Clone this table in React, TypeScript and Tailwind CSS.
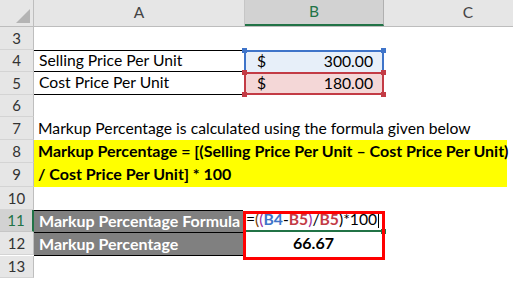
import React from "react";

const font = { fontFamily: "Lato, 'Liberation Sans', sans-serif" };

const RowNum = ({ n, active = false }: { n: number; active?: boolean }) => (
  <div
    className={
      "w-[34px] shrink-0 flex items-center justify-center text-[15px] border-b border-r " +
      (active
        ? "bg-[#d2d2d2] text-[#217346] border-b-[#c6c6c6] border-r-2 border-r-[#217346]"
        : "bg-[#e6e6e6] text-[#333] border-b-[#d4d4d4] border-r-[#bebebe]")
    }
  >
    {n}
  </div>
);

const Row = ({ n, active, children }: { n: number; active?: boolean; children?: React.ReactNode }) => (
  <div className="flex h-[22.6px]">
    <RowNum n={n} active={active} />
    {children}
  </div>
);

const Handle = ({ cls }: { cls: string }) => (
  <span className={"absolute w-[5px] h-[5px] " + cls} />
);

export default function App() {
  return (
    <div className="w-[513px] h-[281px] overflow-hidden bg-white text-black text-[15.7px]" style={font}>
      {/* column headers */}
      <div className="flex h-[27px] bg-[#e6e6e6] border-b border-[#bdbdbd] text-[15.5px]">
        <div className="w-[34px] shrink-0 relative border-r border-[#bebebe]">
          <svg className="absolute right-[3px] bottom-[3px]" width="14" height="14" viewBox="0 0 14 14">
            <polygon points="14,0 14,14 0,14" fill="#b4b4b4" />
          </svg>
        </div>
        <div className="w-[211px] shrink-0 flex items-center justify-center text-[#444] border-r border-[#c6c6c6]">A</div>
        <div className="w-[139px] shrink-0 flex items-center justify-center bg-[#d2d2d2] text-[#217346] border-r border-[#b0b0b0] border-b-2 border-b-[#217346]">B</div>
        <div className="w-[168px] shrink-0 flex items-center justify-center text-[#444]">C</div>
      </div>

      <Row n={3} />
      <Row n={4}>
        <div className="w-[210px] shrink-0 flex items-center pl-[5px] border-t border-b border-black">Selling Price Per Unit</div>
        <div className="w-[140px] shrink-0 relative flex items-center justify-between pl-[11px] pr-[9px] bg-[#e7eff9] border-2 border-b-0 border-[#3f74c9]">
          <span>$</span>
          <span>300.00</span>
          <Handle cls="bg-[#3f74c9] -left-[4px] -top-[4px]" />
          <Handle cls="bg-[#3f74c9] -right-[4px] -top-[4px]" />
        </div>
      </Row>
      <Row n={5}>
        <div className="w-[210px] shrink-0 flex items-center pl-[5px] border-b border-black">Cost Price Per Unit</div>
        <div className="w-[140px] shrink-0 relative flex items-center justify-between pl-[11px] pr-[9px] bg-[#f4d7d7] border-2 border-[#c33b45]">
          <span>$</span>
          <span>180.00</span>
          <Handle cls="bg-[#c33b45] -left-[4px] -top-[4px]" />
          <Handle cls="bg-[#c33b45] -right-[4px] -top-[4px]" />
          <Handle cls="bg-[#c33b45] -left-[4px] -bottom-[4px]" />
          <Handle cls="bg-[#c33b45] -right-[4px] -bottom-[4px]" />
        </div>
      </Row>
      <Row n={6} />
      <Row n={7}>
        <div className="flex items-center pl-[4px] whitespace-nowrap">
          Markup Percentage is calculated using the formula given below
        </div>
      </Row>
      <div className="flex">
        <div className="flex flex-col">
          <RowNum n={8} />
          <RowNum n={9} />
        </div>
        <div className="w-[473px] bg-[#ffff00] font-bold text-[16px] flex flex-col pl-[4px] whitespace-nowrap">
          <div className="h-[22.6px] flex items-center">Markup Percentage = [(Selling Price Per Unit – Cost Price Per Unit)</div>
          <div className="h-[22.6px] flex items-center">/ Cost Price Per Unit] * 100</div>
        </div>
      </div>
      <Row n={10} />
      <div className="flex relative">
        <div className="flex flex-col">
          <div className="h-[22.6px] flex"><RowNum n={11} active /></div>
          <div className="h-[22.6px] flex"><RowNum n={12} /></div>
        </div>
        <div className="w-[209px] flex flex-col bg-[#808080] text-white font-bold text-[16px] border-t border-black">
          <div className="h-[22.6px] flex items-center pl-[5px] border-b border-black">Markup Percentage Formula</div>
          <div className="h-[22.6px] flex items-center pl-[5px] border-b border-black">Markup Percentage</div>
        </div>
        <div className="w-[141px] flex flex-col">
          <div className="h-[22.6px] relative flex items-center pl-[3px] border-b-2 border-[#217346]">
            <span>=</span>
            <span className="text-[#7a3b00]">(</span>
            <span className="text-[#9b2fa0]">(</span>
            <span className="text-[#3f74c9] font-bold">B4</span>
            <span>-</span>
            <span className="text-[#c33b45] font-bold">B5</span>
            <span className="text-[#9b2fa0]">)</span>
            <span>/</span>
            <span className="text-[#c33b45] font-bold">B5</span>
            <span>)*100</span>
            <span className="ml-[1px] w-[1px] h-[17px] bg-black" />
            <span className="absolute -right-[2px] -bottom-[4px] w-[5px] h-[5px] bg-[#217346]" />
          </div>
          <div className="h-[22.6px] flex items-center justify-center font-bold text-[16px]">66.67</div>
          {/* red highlight box */}
          <div className="absolute left-[243px] top-[1px] w-[142px] h-[49px] border-[3px] border-[#ff0000]" />
        </div>
      </div>
      <Row n={13} />
    </div>
  );
}
